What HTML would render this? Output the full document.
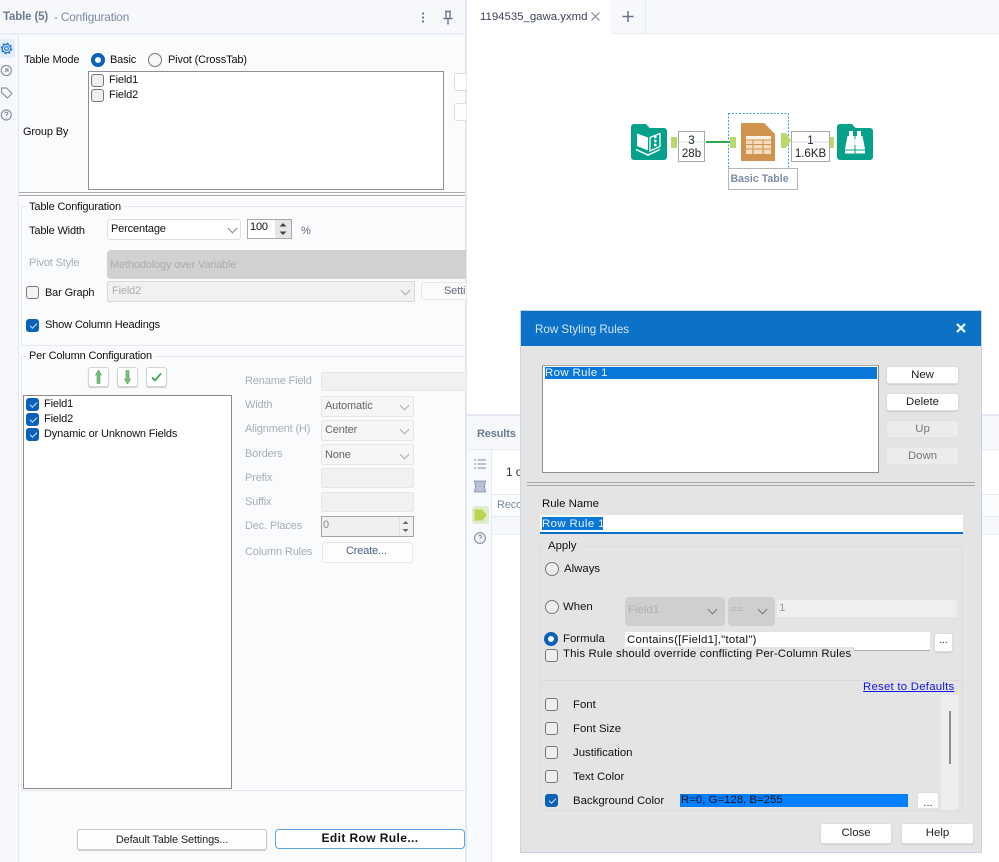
<!DOCTYPE html>
<html lang="en">
<head>
<meta charset="utf-8">
<title>Table Configuration</title>
<style>
html,body{margin:0;padding:0;background:#fff}
#r{position:relative;width:999px;height:862px;overflow:hidden;background:#fff;font-family:"Liberation Sans","Noto Sans CJK JP",sans-serif;font-size:11px;letter-spacing:-.15px;color:#333;filter:blur(.3px)}
#r div,#r span.t,#r svg{position:absolute;box-sizing:border-box}
#dlg{font-size:11.4px;letter-spacing:0}
.t{position:absolute;line-height:16px;white-space:nowrap;margin-top:1px}
.g{color:#a9adb3}
.d{color:#111}
.cb{width:13px;height:13px;border:1px solid #777;border-radius:3px;background:#efefef}
.cb.w{background:#f4f4f4}
.cb.on{background:#0a62b8;border-color:#0a62b8}
.cb.on::after{content:"";position:absolute;left:3px;top:2.5px;width:6px;height:3px;border-left:1px solid #cfe2f6;border-bottom:1px solid #cfe2f6;transform:rotate(-45deg)}
.rd{width:14px;height:14px;border:1.5px solid #777;border-radius:50%;background:#f3f3f3}
.rd.on{border:4px solid #0a62b8;background:#fff}
.sel{background:#fff;border:1px solid #dcdfe4;border-radius:3px}
.fd{background:#f1f1f1;border:1px solid #e4e6ea;border-radius:2px}
.btn{background:#fff;border:1px solid #d4d4d4;border-radius:3px;box-shadow:0 1px 1px #ccc;text-align:center;line-height:17px;color:#222}
.chev{width:7px;height:7px;border-right:1px solid #888;border-bottom:1px solid #888;transform:rotate(45deg)}
</style>
</head>
<body>
<div id="r">
<!-- Left panel -->
<div style="left:0;top:0;width:466px;height:862px;background:#fafbfd"></div>
<div style="left:0;top:0;width:466px;height:35px;background:#f6f8fc;border-bottom:2px solid #e9edf5"></div>
<div style="left:0;top:35px;width:19px;height:827px;background:#f6f8fc;border-right:1px solid #e3e7ef"></div>
<div style="left:465px;top:0;width:2px;height:862px;background:#e2e7f1"></div>
<span class="t" style="left:3px;top:8px;font-weight:bold;color:#6c7b90;font-size:11.5px">Table (5)</span>
<span class="t" style="left:54px;top:8px;color:#7c8a9e;font-size:11.8px">- Configuration</span>
<svg style="left:419px;top:12px" width="8" height="11"><circle cx="4" cy="1.500" r="1.100" fill="#66758c"/><circle cx="4" cy="5.500" r="1.100" fill="#66758c"/><circle cx="4" cy="9.500" r="1.100" fill="#66758c"/></svg>
<svg style="left:441px;top:10px" width="14" height="15" fill="none" stroke="#66758c" stroke-width="1.400"><path d="M4 1.500h6M5 1.500v6M9 1.500v6M2.500 8.500h9M7 8.500v6"/></svg>
<!-- sidebar icons -->
<div style="left:0;top:39px;width:15px;height:19px;background:#e4eefb;border-radius:0 3px 3px 0"></div>
<svg style="left:0;top:42px" width="14" height="14" fill="none" stroke="#2f7fd0"><circle cx="6.500" cy="6.500" r="1.900" stroke-width="1.300"/><circle cx="6.500" cy="6.500" r="4.200" stroke-width="1.300"/><circle cx="6.500" cy="6.500" r="5.200" stroke-width="1.400" stroke-dasharray="2 2.100"/></svg>
<svg style="left:0;top:64px" width="13" height="13" fill="none" stroke="#8a94a6" stroke-width="1.200"><circle cx="6.300" cy="6.500" r="5"/><path d="M4.800 8l3-3M5 5h3v3"/></svg>
<svg style="left:0;top:86px" width="13" height="14" fill="none" stroke="#8a94a6" stroke-width="1.200"><path d="M1.500 2h5l5.500 5.500-4.500 4.500L1.500 6.500z" stroke-linejoin="round"/></svg>
<svg style="left:0;top:108px" width="13" height="14" fill="none" stroke="#8a94a6" stroke-width="1.200"><circle cx="6.300" cy="7" r="5"/><path d="M4.800 5.500a1.500 1.500 0 1 1 2.200 1.400c-.5.300-.7.600-.7 1.200M6.300 9.600v.8"/></svg>
<!-- table mode -->
<span class="t d" style="left:24px;top:51px">Table Mode</span>
<div class="rd on" style="left:91px;top:53px"></div>
<span class="t d" style="left:110px;top:51px">Basic</span>
<div class="rd" style="left:148px;top:53px;background:#f6f6f6"></div>
<span class="t d" style="left:168px;top:51px">Pivot (CrossTab)</span>
<div style="left:88px;top:71px;width:356px;height:119px;background:#fff;border:1px solid #8f8f8f"></div>
<div class="cb" style="left:91px;top:74px"></div>
<span class="t d" style="left:109px;top:71px">Field1</span>
<div class="cb" style="left:91px;top:89px"></div>
<span class="t d" style="left:109px;top:86px">Field2</span>
<span class="t d" style="left:23px;top:123px">Group By</span>
<div style="left:454px;top:73px;width:12px;height:18px;background:#fff;border:1px solid #ddd;border-right:0;border-radius:3px 0 0 3px"></div>
<div style="left:454px;top:103px;width:12px;height:18px;background:#fff;border:1px solid #ddd;border-right:0;border-radius:3px 0 0 3px"></div>
<div style="left:19px;top:192px;width:446px;height:4px;border-top:1px solid #aaa;border-bottom:1px solid #aaa"></div>
<!-- Table config -->
<div style="left:21px;top:206px;width:445px;height:140px;border:1px solid #e6e8ec;border-right:0;border-radius:2px 0 0 2px"></div>
<span class="t d" style="left:26px;top:198px;background:#fafbfd;padding:0 3px">Table Configuration</span>
<span class="t d" style="left:29px;top:222px">Table Width</span>
<div class="sel" style="left:107px;top:219px;width:134px;height:21px"></div>
<span class="t d" style="left:111px;top:220px">Percentage</span>
<div class="chev" style="left:229px;top:225px"></div>
<div style="left:247px;top:219px;width:45px;height:20px;background:#fff;border:1px solid #aaa"></div>
<span class="t d" style="left:250px;top:218px">100</span>
<div style="left:275px;top:220px;width:16px;height:18px;background:#e6e6e6"></div>
<svg style="left:278px;top:222px" width="10" height="14" fill="#444"><path d="M5 1l3.500 3.500h-7zM5 13L1.500 9.500h7z"/></svg>
<span class="t" style="left:301px;top:222px;color:#667">%</span>
<span class="t g" style="left:29px;top:254px">Pivot Style</span>
<div style="left:107px;top:250px;width:359px;height:29px;background:#d1d1d1;border-radius:4px 0 0 4px"></div>
<span class="t" style="left:110px;top:256px;color:#adadad">Methodology over Variable</span>
<div class="cb w" style="left:26px;top:286px"></div>
<span class="t d" style="left:45px;top:284px">Bar Graph</span>
<div style="left:107px;top:281px;width:308px;height:21px;background:#f1f1f1;border:1px solid #d8d8d8;border-radius:2px"></div>
<span class="t g" style="left:112px;top:282px">Field2</span>
<div class="chev" style="left:402px;top:287px;border-color:#aaa"></div>
<div style="left:421px;top:282px;width:45px;height:18px;background:#fbfbfb;border:1px solid #e6e6e6;border-right:0;border-radius:3px 0 0 3px"></div>
<span class="t" style="left:444px;top:282px;color:#5d6a80;overflow:hidden;width:22px">Settings</span>
<div class="cb on" style="left:26px;top:319px"></div>
<span class="t d" style="left:45px;top:316px">Show Column Headings</span>
<!-- Per column -->
<div style="left:21px;top:356px;width:445px;height:435px;border:1px solid #e6e8ec;border-right:0"></div>
<span class="t d" style="left:26px;top:347px;background:#fafbfd;padding:0 3px">Per Column Configuration</span>
<div class="btn" style="left:88px;top:367px;width:21px;height:20px"></div>
<svg style="left:93px;top:369px" width="11" height="16" fill="#7cc07e" stroke="#4d9f4f" stroke-width=".6"><path d="M5.500 1L8.500 6H7v8.500H4V6H2.500z"/></svg>
<div class="btn" style="left:117px;top:367px;width:21px;height:20px"></div>
<svg style="left:122px;top:369px" width="11" height="16" fill="#7cc07e" stroke="#4d9f4f" stroke-width=".6"><path d="M5.500 15L8.500 10H7V1.500H4V10H2.500z"/></svg>
<div class="btn" style="left:146px;top:367px;width:21px;height:20px"></div>
<svg style="left:150px;top:371px" width="13" height="12" fill="none" stroke="#2d9f3a" stroke-width="1.600"><path d="M2 6.500l3 3 6-7"/></svg>
<div style="left:23px;top:395px;width:209px;height:394px;background:#fff;border:1px solid #8a8a8a"></div>
<div class="cb on" style="left:26px;top:398px"></div>
<span class="t d" style="left:44px;top:395px">Field1</span>
<div class="cb on" style="left:26px;top:413px"></div>
<span class="t d" style="left:44px;top:410px">Field2</span>
<div class="cb on" style="left:26px;top:428px"></div>
<span class="t d" style="left:44px;top:425px">Dynamic or Unknown Fields</span>
<span class="t g" style="left:245px;top:372px">Rename Field</span>
<div class="fd" style="left:321px;top:372px;width:145px;height:19px;border-right:0"></div>
<span class="t g" style="left:245px;top:396px">Width</span>
<div class="fd" style="left:321px;top:396px;width:93px;height:21px;background:#f6f6f6"></div>
<span class="t" style="left:325px;top:397px;color:#666">Automatic</span>
<div class="chev" style="left:401px;top:402px;border-color:#aaa"></div>
<span class="t g" style="left:245px;top:420px">Alignment (H)</span>
<div class="fd" style="left:321px;top:420px;width:93px;height:21px;background:#f6f6f6"></div>
<span class="t" style="left:325px;top:421px;color:#666">Center</span>
<div class="chev" style="left:401px;top:426px;border-color:#aaa"></div>
<span class="t g" style="left:245px;top:445px">Borders</span>
<div class="fd" style="left:321px;top:444px;width:93px;height:21px;background:#f6f6f6"></div>
<span class="t" style="left:325px;top:446px;color:#666">None</span>
<div class="chev" style="left:401px;top:451px;border-color:#aaa"></div>
<span class="t g" style="left:245px;top:469px">Prefix</span>
<div class="fd" style="left:321px;top:468px;width:93px;height:20px"></div>
<span class="t g" style="left:245px;top:493px">Suffix</span>
<div class="fd" style="left:321px;top:492px;width:93px;height:20px"></div>
<span class="t g" style="left:245px;top:517px">Dec. Places</span>
<div style="left:321px;top:516px;width:93px;height:21px;background:#f0f0f0;border:1px solid #a5a5a5"></div>
<span class="t" style="left:323px;top:516px;color:#888">0</span>
<svg style="left:399px;top:518px" width="14" height="17" fill="#666"><path d="M0 0h1v17H0z" fill="#ddd"/><path d="M6.500 3l3 3h-6zM6.500 14l-3-3h6z"/></svg>
<span class="t g" style="left:245px;top:543px">Column Rules</span>
<div style="left:322px;top:542px;width:91px;height:21px;background:#fdfdfd;border:1px solid #e8e8e8;border-radius:3px"></div>
<span class="t" style="left:346px;top:542px;color:#4a6088">Create...</span>
<div class="btn" style="left:77px;top:829px;width:190px;height:21px;background:#fdfdfd;line-height:20px;border-color:#ccc">Default Table Settings...</div>
<div class="btn" style="left:275px;top:829px;width:190px;height:20px;border:1.5px solid #5aa6e8;box-shadow:none;font-weight:bold;color:#111;font-size:12px;letter-spacing:.4px;line-height:17px;border-radius:4px">Edit Row Rule...</div>

<!-- Tabs -->
<div style="left:611px;top:0;width:388px;height:34px;background:#f6f8fc;border-bottom:1px solid #e9edf5"></div>
<div style="left:645px;top:0;width:1px;height:33px;background:#e6eaf2"></div>
<span class="t" style="left:480px;top:8px;color:#3b4454;font-size:11.4px;letter-spacing:0">1194535_gawa.yxmd</span>
<svg style="left:590px;top:11px" width="11" height="11" stroke="#7c8a9e" stroke-width="1.200"><path d="M1.500 1.500l8 8M9.500 1.500l-8 8"/></svg>
<svg style="left:622px;top:10px" width="12" height="13" stroke="#66758c" stroke-width="1.500"><path d="M6 1v11M.5 6.500h11"/></svg>

<!-- Canvas -->
<svg style="left:625px;top:105px;letter-spacing:0" width="260" height="90">
  <!-- input tool -->
  <path d="M9 19h12l3.500 4H39a3 3 0 0 1 3 3v26a3 3 0 0 1-3 3H9a3 3 0 0 1-3-3V22a3 3 0 0 1 3-3z" fill="#07a08a"/>
  <path d="M12 28.500l11 4v13l-11-4.500z" fill="#fff"/>
  <path d="M25 32.500l10-4v13l-10 4.500z" fill="#07a08a" stroke="#fff" stroke-width="1.300"/>
  <path d="M11 44.500L23 50l12-5.500" fill="none" stroke="#fff" stroke-width="1.500"/>
  <circle cx="30.300" cy="32" r="1.400" fill="#fff"/><circle cx="30.300" cy="36" r="1.400" fill="#fff"/><circle cx="30.300" cy="40" r="1.400" fill="#fff"/>
  <!-- anchors -->
  <path d="M46 32h6v11h-6z" fill="#b9d96b"/>
  <path d="M81 37h27" stroke="#2aa84a" stroke-width="2"/>
  <rect x="53.500" y="26.500" width="26" height="30" fill="#fff" stroke="#a8a8a8"/>
  <path d="M54 37h25" stroke="#cfe8cf"/>
  <text x="66.500" y="39" text-anchor="middle" font-size="11.500" fill="#222" font-family="Liberation Sans">3</text>
  <text x="66.500" y="52" text-anchor="middle" font-size="11.500" fill="#222" font-family="Liberation Sans">28b</text>
  <!-- table tool -->
  <rect x="103.500" y="8.500" width="60" height="58" fill="none" stroke="#4a9be8" stroke-dasharray="2 1.500"/>
  <path d="M105 32h6v11h-6z" fill="#b9d96b"/>
  <path d="M116 18h23l11 11v27h-34z" fill="#d1944f"/>
  <path d="M121 31h25v18h-25z" fill="#f3dcc0"/>
  <path d="M121 31h25v3.500h-25z" fill="#fbf1e4"/>
  <path d="M121 35h25M121 39.500h25M121 44h25M128 35v14M138 35v14" stroke="#d1944f" stroke-width="1.100"/>
  <path d="M156 28h5l5 7.500-5 7.500h-5z" fill="#b9d96b"/>
  <rect x="166.500" y="26.500" width="38" height="30" fill="#fff" stroke="#a8a8a8"/>
  <path d="M167 37h37" stroke="#d4d4f4"/>
  <text x="185.500" y="39" text-anchor="middle" font-size="11.500" fill="#222" font-family="Liberation Sans">1</text>
  <text x="185.500" y="52" text-anchor="middle" font-size="11.500" fill="#222" font-family="Liberation Sans">1.6KB</text>
  <path d="M205 32h4v11h-4z" fill="#b9d96b"/>
  <!-- browse tool -->
  <path d="M215 19h12l3.500 4H245a3 3 0 0 1 3 3v26a3 3 0 0 1-3 3h-30a3 3 0 0 1-3-3V22a3 3 0 0 1 3-3z" fill="#07a08a"/>
  <path d="M224 26h4v5h1.500v17.500H220V44l2.500-13H224z" fill="#fff"/>
  <path d="M236 26h-4v5h-1.500v17.500H240V44l-2.500-13H236z" fill="#fff"/>
  <path d="M229.500 34h1v6h-1z" fill="#cfeee8"/>
  <path d="M220 45h9.500M230.500 45H240" stroke="#07a08a" stroke-width="1"/>
  <!-- label -->
  <rect x="103.500" y="63.500" width="69" height="21" fill="#fff" stroke="#b5b5b5"/>
  <text x="105.500" y="77" font-size="10.600" font-weight="bold" fill="#7d8ca6" font-family="Liberation Sans">Basic Table</text>
</svg>

<!-- Results panel -->
<div style="left:467px;top:414px;width:532px;height:36px;background:#f6f8fc;border-top:2px solid #e2e7f1;border-bottom:1px solid #e9edf5"></div>
<div style="left:467px;top:450px;width:25px;height:412px;background:#f9fafd;border-right:1px solid #e6eaf2"></div>
<span class="t" style="left:477px;top:425px;font-weight:bold;color:#6c7b90;font-size:11px">Results</span>
<svg style="left:474px;top:458px" width="12" height="12" stroke="#7c8ba6" stroke-width="1.100"><path d="M3.500 2H12M3.500 6H12M3.500 10H12M0 2h2M0 6h2M0 10h2"/></svg>
<svg style="left:474px;top:480px" width="12" height="13"><path d="M.5 1h11l-1 5.500 1 5.500H.5l1-5.500z" fill="#b7c1d4" stroke="#7c8ba6" stroke-width=".8"/></svg>
<div style="left:472px;top:506px;width:17px;height:18px;background:#dcefc9;border-radius:3px"></div>
<svg style="left:474px;top:509px" width="14" height="12"><path d="M.5 .5h8l4 5.500-4 5.500h-8z" fill="#b9d450"/></svg>
<svg style="left:473px;top:531px" width="14" height="14" fill="none" stroke="#8a94a6" stroke-width="1.200"><circle cx="7" cy="7" r="5.400"/><path d="M5.500 5.500a1.500 1.500 0 1 1 2.200 1.400c-.5.300-.7.600-.7 1.200M7 9.500v.8"/></svg>
<span class="t" style="left:506px;top:463px;color:#333;font-size:12px">1 of</span>
<div style="left:492px;top:494px;width:507px;height:23px;border-top:1px solid #e6eaf2;border-bottom:1px solid #e6eaf2;background:#fbfcfe"></div>
<div style="left:492px;top:517px;width:507px;height:18px;background:#f6f8fc;border-bottom:1px solid #e9edf5"></div>
<span class="t" style="left:497px;top:496px;color:#7c8a9e">Record</span>

<!-- Dialog -->
<div id="dlg" style="left:0;top:0;width:999px;height:862px">
<div style="left:520px;top:310px;width:462px;height:543px;background:#e4e4e4;border:1px solid #c8d4e6"></div>
<div style="left:521px;top:311px;width:460px;height:35px;background:#0b72c7"></div>
<span class="t" style="left:535px;top:321px;color:#d6e6f6;font-size:11.6px">Row Styling Rules</span>
<svg style="left:955px;top:322px" width="12" height="12" stroke="#fff" stroke-width="2.200"><path d="M2 2l8 8M10 2l-8 8"/></svg>
<div style="left:542px;top:365px;width:337px;height:108px;background:#fff;border:1px solid #8f8f8f;border-top-color:#aaa"></div>
<div style="left:545px;top:367px;width:332px;height:12px;background:#0a78d8"></div>
<span class="t" style="left:545px;top:364px;color:#eaf3fc;letter-spacing:.4px">Row Rule 1</span>
<div class="btn" style="left:886px;top:366px;width:73px;height:18px;line-height:16px;border-color:#ddd">New</div>
<div class="btn" style="left:886px;top:393px;width:73px;height:18px;line-height:16px;border-color:#ddd">Delete</div>
<div class="btn" style="left:886px;top:420px;width:73px;height:18px;line-height:16px;background:#ececec;border-color:#e2e2e2;box-shadow:none;color:#777">Up</div>
<div class="btn" style="left:886px;top:447px;width:73px;height:18px;line-height:16px;background:#ececec;border-color:#e2e2e2;box-shadow:none;color:#777">Down</div>
<div style="left:527px;top:482px;width:448px;height:4px;border-top:1px solid #a8a8a8;border-bottom:1px solid #a8a8a8"></div>
<span class="t d" style="left:542px;top:495px">Rule Name</span>
<div style="left:540px;top:515px;width:423px;height:19px;background:#fff;border-bottom:2px solid #0a6fc4"></div>
<div style="left:542px;top:517px;width:61px;height:13px;background:#0a78d8"></div>
<span class="t" style="left:542px;top:515px;color:#e8f2fc;letter-spacing:.4px">Row Rule 1</span>
<!-- Apply group -->
<div style="left:540px;top:546px;width:423px;height:265px;border:1px solid #dcdcdc"></div>
<div style="left:541px;top:680px;width:421px;height:1px;background:#dadada"></div>
<span class="t d" style="left:546px;top:537px;background:#e4e4e4;padding:0 2px">Apply</span>
<div class="rd" style="left:545px;top:562px;background:#eee"></div>
<span class="t d" style="left:564px;top:560px">Always</span>
<div class="rd" style="left:545px;top:600px;background:#eee"></div>
<span class="t d" style="left:563px;top:598px">When</span>
<div style="left:625px;top:597px;width:100px;height:29px;background:#cfcfcf;border-radius:4px"></div>
<span class="t" style="left:628px;top:601px;color:#b0b0b0">Field1</span>
<div class="chev" style="left:709px;top:606px;border-color:#777"></div>
<div style="left:728px;top:597px;width:47px;height:29px;background:#cfcfcf;border-radius:4px"></div>
<span class="t" style="left:730px;top:601px;color:#b0b0b0">==</span>
<div class="chev" style="left:759px;top:606px;border-color:#777"></div>
<div style="left:777px;top:600px;width:180px;height:17px;background:#efefef"></div>
<span class="t" style="left:779px;top:599px;color:#999">1</span>
<div class="rd on" style="left:544px;top:632px"></div>
<span class="t d" style="left:563px;top:630px">Formula</span>
<div style="left:625px;top:632px;width:305px;height:19px;background:#fff;border-bottom:1px solid #aaa"></div>
<span class="t d" style="left:627px;top:631px;letter-spacing:.27px">Contains([Field1],"total")</span>
<div class="btn" style="left:934px;top:633px;width:19px;height:19px;line-height:14px;border-color:#ddd;font-size:10px">...</div>
<div style="left:558px;top:647px;width:296px;height:16px;background:#e4e4e4"></div>
<div class="cb" style="left:545px;top:649px;background:#eee"></div>
<span class="t d" style="left:563px;top:645px;letter-spacing:.17px">This Rule should override conflicting Per-Column Rules</span>
<span class="t" style="left:863px;top:678px;color:#1414e6;text-decoration:underline;letter-spacing:.24px">Reset to Defaults</span>
<div style="left:941px;top:695px;width:17px;height:115px;background:#eee"></div>
<div style="left:949px;top:711px;width:2px;height:53px;background:#8d8d8d"></div>
<div class="cb" style="left:545px;top:698px;background:#eee"></div>
<span class="t d" style="left:573px;top:696px">Font</span>
<div class="cb" style="left:545px;top:722px;background:#eee"></div>
<span class="t d" style="left:573px;top:720px">Font Size</span>
<div class="cb" style="left:545px;top:746px;background:#eee"></div>
<span class="t d" style="left:573px;top:744px">Justification</span>
<div class="cb" style="left:545px;top:770px;background:#eee"></div>
<span class="t d" style="left:573px;top:768px">Text Color</span>
<div class="cb on" style="left:545px;top:794px"></div>
<span class="t d" style="left:573px;top:792px">Background Color</span>
<div style="left:680px;top:794px;width:228px;height:13px;background:#0080ff"></div>
<span class="t d" style="left:681px;top:791px">R=0, G=128, B=255</span>
<div style="left:917px;top:792px;width:22px;height:16px;background:#fff;border:1px solid #ddd;border-bottom:0;border-radius:3px 3px 0 0;text-align:center;line-height:20px;font-size:11px;color:#333;overflow:hidden">...</div>
<div class="btn" style="left:820px;top:823px;width:72px;height:21px;line-height:19px;border-color:#ddd">Close</div>
<div class="btn" style="left:901px;top:823px;width:73px;height:21px;line-height:19px;border-color:#ddd">Help</div>
</div>
</div>
</body>
</html>
